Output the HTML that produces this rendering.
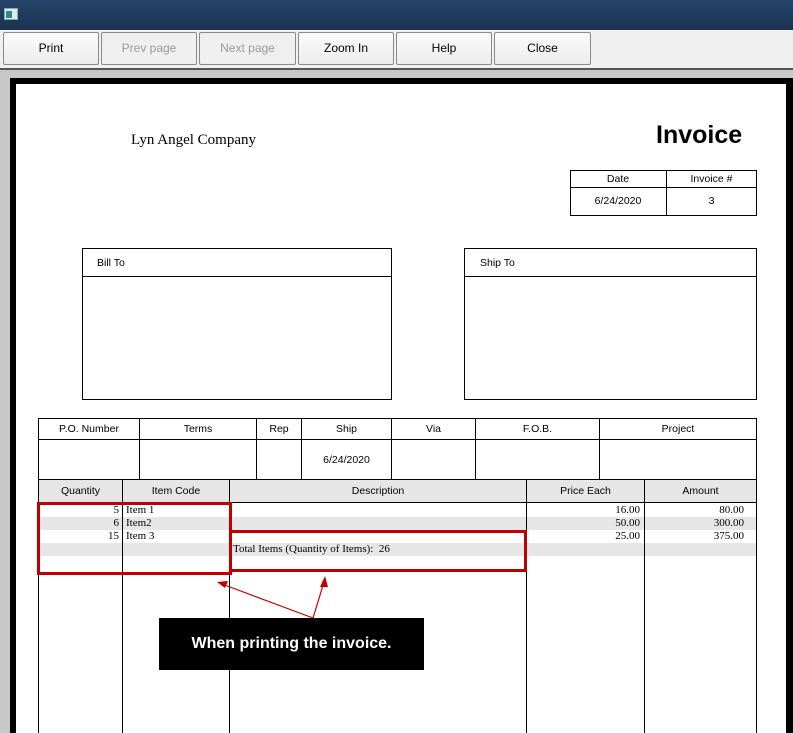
<!DOCTYPE html>
<html style="width:793px;height:733px;overflow:hidden"><head><style>
*{margin:0;padding:0;box-sizing:border-box}
body{width:793px;height:733px;overflow:hidden;background:#c8c8c8;font-family:"Liberation Sans",sans-serif;position:relative}
.a{position:absolute}
.btn{position:absolute;top:32px;height:33px;border:1px solid #8a8a8a;border-radius:2px;background:linear-gradient(#fbfbfb,#ececec);font-size:12px;text-align:center;line-height:31px;color:#000}
.dis{color:#9a9a9a;background:#efefef}
.b{position:absolute;border:1px solid #000}
.t{position:absolute;font-size:10.5px;text-align:center}
.vl{position:absolute;width:1px;background:#000}
.hl{position:absolute;height:1px;background:#000}
.s{font-family:"Liberation Serif",serif;font-size:11px;position:absolute}
</style></head><body>
<div class="a" style="left:0;top:0;width:793px;height:30px;background:linear-gradient(#24466a,#1b3350)"></div>
<div class="a" style="left:4px;top:8px;width:14px;height:12px;background:#dfe8ee;border:1px solid #8aa"></div>
<div class="a" style="left:6px;top:11px;width:6px;height:7px;background:#2a8a8a"></div>
<div class="a" style="left:0;top:30px;width:793px;height:38px;background:#f0f0f0"></div>
<div class="btn" style="left:3px;width:96px">Print</div>
<div class="btn dis" style="left:101px;width:96px">Prev page</div>
<div class="btn dis" style="left:199px;width:97px">Next page</div>
<div class="btn" style="left:298px;width:96px">Zoom In</div>
<div class="btn" style="left:396px;width:96px">Help</div>
<div class="btn" style="left:494px;width:97px">Close</div>
<div class="a" style="left:0;top:68px;width:793px;height:2px;background:#555"></div>
<div class="a" style="left:10px;top:78px;width:783px;height:655px;background:#000"></div>
<div class="a" style="left:16px;top:84px;width:770px;height:649px;background:#fff"></div>

<div class="a" style="left:131px;top:132px;font-family:'Liberation Serif',serif;font-size:15px">Lyn Angel Company</div>
<div class="a" style="left:656px;top:121px;font-size:25px;font-weight:bold">Invoice</div>

<div class="b" style="left:570px;top:170px;width:187px;height:46px"></div>
<div class="hl" style="left:570px;top:187px;width:186px"></div>
<div class="vl" style="left:666px;top:170px;height:46px"></div>
<div class="t" style="left:570px;top:173px;width:96px">Date</div>
<div class="t" style="left:667px;top:173px;width:89px">Invoice #</div>
<div class="t" style="left:570px;top:195px;width:96px">6/24/2020</div>
<div class="t" style="left:667px;top:195px;width:89px">3</div>

<div class="b" style="left:82px;top:248px;width:310px;height:152px"></div>
<div class="hl" style="left:82px;top:276px;width:309px"></div>
<div class="t" style="left:97px;top:257px">Bill To</div>
<div class="b" style="left:464px;top:248px;width:293px;height:152px"></div>
<div class="hl" style="left:464px;top:276px;width:292px"></div>
<div class="t" style="left:480px;top:257px">Ship To</div>

<div class="b" style="left:38px;top:418px;width:719px;height:62px"></div>
<div class="hl" style="left:38px;top:439px;width:718px"></div>
<div class="vl" style="left:139px;top:418px;height:62px"></div>
<div class="vl" style="left:256px;top:418px;height:62px"></div>
<div class="vl" style="left:301px;top:418px;height:62px"></div>
<div class="vl" style="left:391px;top:418px;height:62px"></div>
<div class="vl" style="left:475px;top:418px;height:62px"></div>
<div class="vl" style="left:599px;top:418px;height:62px"></div>
<div class="t" style="left:39px;top:423px;width:100px">P.O. Number</div>
<div class="t" style="left:140px;top:423px;width:116px">Terms</div>
<div class="t" style="left:257px;top:423px;width:44px">Rep</div>
<div class="t" style="left:302px;top:423px;width:89px">Ship</div>
<div class="t" style="left:392px;top:423px;width:83px">Via</div>
<div class="t" style="left:476px;top:423px;width:123px">F.O.B.</div>
<div class="t" style="left:600px;top:423px;width:156px">Project</div>
<div class="t" style="left:302px;top:454px;width:89px">6/24/2020</div>

<div class="a" style="left:38px;top:480px;width:719px;height:23px;background:#e6e6e6;border:1px solid #000;border-top:none"></div>
<div class="hl" style="left:38px;top:502px;width:718px"></div>
<div class="a" style="left:39px;top:517px;width:717px;height:13px;background:#e6e6e6"></div>
<div class="a" style="left:39px;top:543px;width:717px;height:13px;background:#e6e6e6"></div>
<div class="vl" style="left:38px;top:480px;height:260px"></div>
<div class="vl" style="left:756px;top:480px;height:260px"></div>
<div class="vl" style="left:122px;top:480px;height:260px"></div>
<div class="vl" style="left:229px;top:480px;height:260px"></div>
<div class="vl" style="left:526px;top:480px;height:260px"></div>
<div class="vl" style="left:644px;top:480px;height:260px"></div>
<div class="t" style="left:39px;top:485px;width:83px">Quantity</div>
<div class="t" style="left:123px;top:485px;width:106px">Item Code</div>
<div class="t" style="left:230px;top:485px;width:296px">Description</div>
<div class="t" style="left:527px;top:485px;width:117px">Price Each</div>
<div class="t" style="left:645px;top:485px;width:111px">Amount</div>

<div class="s" style="left:60px;top:504px;width:59px;text-align:right;line-height:13px">5<br>6<br>15</div>
<div class="s" style="left:126px;top:504px;line-height:13px">Item 1<br>Item2<br>Item 3</div>
<div class="s" style="left:530px;top:504px;width:110px;text-align:right;line-height:13px">16.00<br>50.00<br>25.00</div>
<div class="s" style="left:650px;top:504px;width:94px;text-align:right;line-height:13px">80.00<br>300.00<br>375.00</div>
<div class="s" style="left:233px;top:543px;line-height:13px">Total Items (Quantity of Items):&nbsp; 26</div>

<div class="a" style="left:37px;top:502px;width:195px;height:73px;border:3px solid #c00000"></div>
<div class="a" style="left:229px;top:530px;width:298px;height:42px;border:3px solid #c00000"></div>

<svg class="a" style="left:0;top:0" width="793" height="733">
<g stroke="#c00000" stroke-width="1.2" fill="#c00000">
<line x1="313" y1="618" x2="222" y2="584"/>
<line x1="313" y1="618" x2="324" y2="582"/>
<polygon points="217,582 228,581 225,588" stroke="none"/>
<polygon points="325,576 320,587 328,587" stroke="none"/>
</g></svg>
<div class="a" style="left:159px;top:618px;width:265px;height:52px;background:#000;color:#fff;font-weight:bold;font-size:16px;line-height:52px;text-align:center">When printing the invoice.</div>
</body></html>
